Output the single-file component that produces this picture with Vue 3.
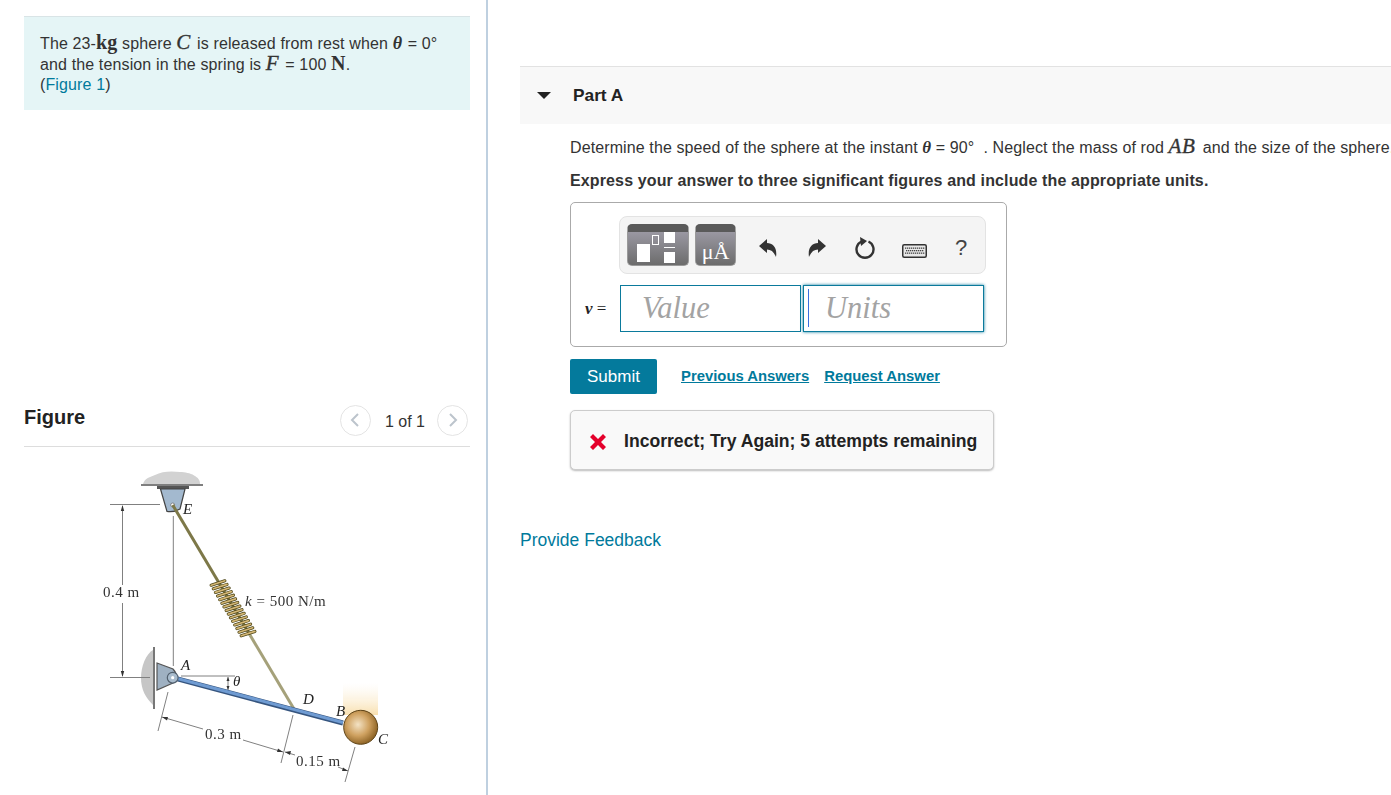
<script setup>
const ux = 121 / 237
const uy = 204 / 237
const coils = Array.from({ length: 15 }, (_, i) => {
  const cx = 218 + ux * 4.2 * i
  const cy = 583 + uy * 4.2 * i
  return {
    x1: cx - uy * 7 - ux * 1.6,
    y1: cy + ux * 7 - uy * 1.6,
    x2: cx + uy * 7 + ux * 1.6,
    y2: cy - ux * 7 + uy * 1.6
  }
})
const keyRows = [
  { y: 3.5, xs: [3, 5, 7, 9, 11, 13, 15, 17, 19, 21] },
  { y: 6, xs: [4, 6, 8, 10, 12, 14, 16, 18, 20] },
  { y: 8.5, xs: [3, 5, 7, 9, 11, 13, 15, 17, 19, 21] }
]
</script>

<template>
  <div class="page">
    <aside class="left">
      <div class="problem">
        The 23-<span class="unit">kg</span> sphere <i class="math big">C</i> is released from rest when <i class="math bold">θ</i> = 0°<br />
        and the tension in the spring is <i class="math big">F</i> = 100 <span class="unit">N</span>.<br />
        (<a class="figlink">Figure 1</a>)
      </div>
      <div class="fighead">
        <h2>Figure</h2>
        <div class="pager">
          <span class="circle">
            <svg width="10" height="16" viewBox="0 0 10 16"><path d="M8 2 L2 8 L8 14" /></svg>
          </span>
          <span class="count">1 of 1</span>
          <span class="circle">
            <svg width="10" height="16" viewBox="0 0 10 16"><path d="M2 2 L8 8 L2 14" /></svg>
          </span>
        </div>
      </div>
      <svg class="figure" width="446" height="348" viewBox="24 447 446 348">
        <defs>
          <radialGradient id="ball" cx="0.42" cy="0.42" r="0.6">
            <stop offset="0" stop-color="#f3e2c4" />
            <stop offset="0.55" stop-color="#cfa160" />
            <stop offset="1" stop-color="#8c6224" />
          </radialGradient>
          <linearGradient id="glow" x1="0" y1="0" x2="0" y2="1">
            <stop offset="0" stop-color="#fdf3df" stop-opacity="0" />
            <stop offset="1" stop-color="#f8dfae" />
          </linearGradient>
        </defs>

        <path d="M143 484 C145 478 150 477 155 475 C162 471 172 471 180 472 C190 472 201 477 200 484 Z" fill="#d2d2d2" />
        <path d="M153 705 C146 698 141 690 141 678 C141 666 146 654 153 650 Z" fill="#c6c6c6" />

        <line x1="141" y1="485" x2="203" y2="485" stroke="#555" stroke-width="1.6" />
        <rect x="157" y="486" width="32" height="3" fill="#555" />
        <path d="M160.5 489 L185 489 L180 509 Q174 512.5 167 511.5 Z" fill="#a3b9cf" stroke="#444" stroke-width="1.2" />
        <circle cx="172.7" cy="505" r="2" fill="#fff" stroke="#666" stroke-width="0.7" />

        <g stroke="#808080" stroke-width="1" fill="none">
          <line x1="110" y1="504.5" x2="160" y2="504.5" />
          <line x1="122.5" y1="506" x2="122.5" y2="585" />
          <line x1="122.5" y1="603" x2="122.5" y2="676" />
          <line x1="110" y1="677.5" x2="150" y2="677.5" />
          <line x1="173.3" y1="516" x2="173.3" y2="666" />
          <line x1="181" y1="676" x2="235" y2="676" />
          <line x1="168" y1="692" x2="158" y2="731" />
          <line x1="293" y1="715" x2="281" y2="763" />
          <line x1="355" y1="747" x2="345" y2="782" />
          <line x1="162" y1="717" x2="203" y2="729" />
          <line x1="243" y1="740" x2="283" y2="752" />
          <line x1="285" y1="752" x2="295" y2="755" />
          <line x1="338" y1="767" x2="348" y2="771" />
          <line x1="228" y1="677" x2="228" y2="693" />
        </g>
        <g fill="#333">
          <path d="M122.5 505 L120.8 511 L124.2 511 Z" />
          <path d="M122.5 677 L120.8 671 L124.2 671 Z" />
          <path d="M162 717 L168 717 L167 720.5 Z" />
          <path d="M283 752 L277 752 L278 748.5 Z" />
          <path d="M285 752 L291 751 L290 755 Z" />
          <path d="M348 771 L342 771 L343 767.5 Z" />
          <path d="M228 677 L226.5 681 L229.5 681 Z" />
          <path d="M228 690 L226.5 686 L229.5 686 Z" />
        </g>

        <rect x="343" y="683" width="35" height="32" fill="url(#glow)" />

        <line x1="172.7" y1="505" x2="250" y2="635" stroke="#7d7848" stroke-width="3" />
        <line x1="250" y1="635" x2="294" y2="709" stroke="#a5a17a" stroke-width="3" />
        <g stroke="#4f4719" stroke-width="3.2" stroke-linecap="round">
          <line v-for="(c, i) in coils" :key="'d' + i" :x1="c.x1" :y1="c.y1" :x2="c.x2" :y2="c.y2" />
        </g>
        <g stroke="#d4b775" stroke-width="1.7" stroke-linecap="round">
          <line v-for="(c, i) in coils" :key="'l' + i" :x1="c.x1" :y1="c.y1" :x2="c.x2" :y2="c.y2" />
        </g>

        <line x1="154" y1="647" x2="154" y2="709" stroke="#555" stroke-width="1.6" />
        <path d="M157 663 L173 669 Q180 677 173 683 L157 690 Z" fill="#9fb1c2" stroke="#555" stroke-width="1.2" />
        <line x1="172.7" y1="677.7" x2="343" y2="723" stroke="#36557f" stroke-width="5" />
        <line x1="172.7" y1="677.2" x2="343" y2="722.5" stroke="#6f9bd2" stroke-width="3" />
        <circle cx="172.7" cy="677.7" r="5.4" fill="#a9bccd" stroke="#52606e" stroke-width="1.2" />
        <circle cx="172.7" cy="677.7" r="1.6" fill="#fff" />
        <circle cx="360.7" cy="727.3" r="17" fill="url(#ball)" stroke="#5f4418" stroke-width="1" />

        <g class="dim">
          <text x="103" y="597">0.4 m</text>
          <text x="245" y="606"><tspan class="ital">k</tspan> = 500 N/m</text>
          <text x="205" y="739">0.3 m</text>
          <text x="296" y="766">0.15 m</text>
        </g>
        <g class="lab">
          <text x="183" y="514">E</text>
          <text x="181" y="670">A</text>
          <text x="233" y="686">θ</text>
          <text x="303" y="704">D</text>
          <text x="336" y="716">B</text>
          <text x="378" y="744">C</text>
        </g>
      </svg>
    </aside>

    <main class="right">
      <header class="parthead">
        <span class="tri"></span>
        <h3>Part A</h3>
      </header>
      <section class="partbody">
        <p class="q">
          Determine the speed of the sphere at the instant <i class="math bold">θ</i> = 90° &nbsp;. Neglect the mass of rod <i class="math big">AB</i> and the size of the sphere.
        </p>
        <p class="ins">Express your answer to three significant figures and include the appropriate units.</p>

        <div class="answer">
          <div class="toolbar">
            <div class="tbtn wide">
              <span class="sq-big"></span>
              <span class="sq-small"></span>
              <span class="frac"><b></b><em></em><b></b></span>
            </div>
            <div class="tbtn narrow"><span class="mu">μÅ</span></div>
            <div class="icons">
              <svg class="ic" width="20" height="20" viewBox="0 0 20 20"><path d="M1 8 L9 1 L9 5 C15 5 19.5 10 18 19 C16 14 13 11.5 9 11.5 L9 15 Z" /></svg>
              <svg class="ic redo" width="20" height="20" viewBox="0 0 20 20"><path d="M19 8 L11 1 L11 5 C5 5 .5 10 2 19 C4 14 7 11.5 11 11.5 L11 15 Z" /></svg>
              <svg class="ic reset" width="22" height="24" viewBox="0 0 22 24"><path class="arc" d="M7.5 5.5 A8.5 8.5 0 1 0 14.5 5.5" /><path d="M6 1 L13 5 L7 10 Z" /></svg>
              <svg class="kb" width="25" height="16" viewBox="0 0 25 14">
                <rect x=".75" y=".75" width="23.5" height="12.5" rx="1.5" />
                <g v-for="r in keyRows" :key="r.y">
                  <rect v-for="x in r.xs" :key="x" :x="x" :y="r.y" width="1.3" height="1.3" />
                </g>
              </svg>
              <span class="help">?</span>
            </div>
          </div>
          <div class="inputs">
            <span class="var"><i>v</i> =</span>
            <div class="field">Value</div>
            <div class="field focus"><span class="caret"></span>Units</div>
          </div>
        </div>

        <div class="actions">
          <button class="submit">Submit</button>
          <a class="act">Previous Answers</a>
          <a class="act">Request Answer</a>
        </div>

        <div class="result">
          <svg width="18" height="18" viewBox="0 0 18 18"><path d="M1 4 L4 1 L9 6 L14 1 L17 4 L12 9 L17 14 L14 17 L9 12 L4 17 L1 14 L6 9 Z" /></svg>
          <span>Incorrect; Try Again; 5 attempts remaining</span>
        </div>
      </section>
      <a class="feedback">Provide Feedback</a>
    </main>
  </div>
</template>

<style>
html, body { margin: 0; background: #fff; }
</style>

<style scoped>
.page {
  display: flex;
  width: 1391px;
  height: 795px;
  overflow: hidden;
  font-family: "Liberation Sans", Arial, sans-serif;
  font-size: 16px;
  color: #333;
  background: #fff;
}
.left {
  flex: none;
  box-sizing: border-box;
  width: 488px;
  padding: 16px 16px 0 24px;
  border-right: 2px solid #bfd0e0;
}
.problem {
  box-sizing: border-box;
  height: 94px;
  padding: 17px 16px 0;
  line-height: 20.5px;
  letter-spacing: 0.13px;
  background: #e5f5f6;
  border-top: 1px solid #d9e4e6;
  white-space: nowrap;
}
.math { font-family: "Liberation Serif", "Times New Roman", serif; line-height: 0; }
.big { font-size: 21px; font-weight: 400; padding-right: 2px; -webkit-text-stroke: 0.35px #333; }
.bold { font-weight: 700; font-size: 18px; padding-right: 1px; }
.unit { font-family: "Liberation Serif", serif; font-weight: 700; font-size: 20px; line-height: 0; }
.figlink { color: #007a9c; }
.fighead {
  display: flex;
  align-items: center;
  justify-content: space-between;
  box-sizing: border-box;
  height: 50px;
  margin-top: 287px;
  padding-bottom: 3px;
  border-bottom: 1px solid #ddd;
}
.fighead h2 {
  margin: 0;
  font-size: 20px;
  font-weight: 700;
  color: #222;
  position: relative;
  top: -3px;
}
.pager { display: flex; align-items: center; margin-right: 2px; }
.count { margin: 3px 12px 0 14px; color: #333; }
.circle {
  display: flex;
  align-items: center;
  justify-content: center;
  width: 31px;
  height: 31px;
  box-sizing: border-box;
  border: 1px solid #e4e4e4;
  border-radius: 50%;
}
.circle path { fill: none; stroke: #bcc4cc; stroke-width: 2; }
.figure { display: block; filter: blur(0.45px); }
.dim text { font: 15px "Liberation Serif", serif; letter-spacing: 0.5px; fill: #333; }
.ital { font-style: italic; }
.lab text { font: italic 15px "Liberation Serif", serif; fill: #222; }

.right { flex: 1; min-width: 0; padding: 66px 0 0 32px; }
.parthead {
  display: flex;
  align-items: center;
  height: 57px;
  border-top: 1px solid #e2e2e2;
  background: #f8f8f8;
}
.tri {
  width: 0;
  height: 0;
  margin-left: 17px;
  border-left: 7px solid transparent;
  border-right: 7px solid transparent;
  border-top: 7px solid #222;
}
.parthead h3 { margin: 0 0 0 22px; font-size: 17.3px; font-weight: 700; color: #222; }
.partbody { padding-left: 50px; letter-spacing: 0.13px; }
.q { margin: 14px 0 0; line-height: 20px; white-space: nowrap; letter-spacing: 0.11px; }
.q .bold { padding-right: 0; font-size: 17px; }
.q .big { padding-right: 3px; letter-spacing: 0.5px; }
.ins { margin: 13px 0 0; line-height: 20px; font-weight: 700; white-space: nowrap; }
.answer {
  box-sizing: border-box;
  width: 437px;
  height: 145px;
  margin-top: 11px;
  padding: 13px 20px 0 13px;
  border: 1px solid #aaa;
  border-radius: 5px;
  letter-spacing: 0;
}
.toolbar {
  display: flex;
  align-items: center;
  box-sizing: border-box;
  width: 367px;
  height: 58px;
  margin-left: 35px;
  padding-left: 7px;
  background: #f4f4f4;
  border: 1px solid #e3e3e3;
  border-radius: 8px;
}
.tbtn {
  position: relative;
  box-sizing: border-box;
  height: 42px;
  border: 1px solid #9a9a9a;
  border-top: 8px solid #5a5a5a;
  border-radius: 5px;
  background: linear-gradient(#9a98a2, #6c6c6c);
}
.wide { width: 62px; margin-right: 6px; }
.narrow { width: 41px; text-align: center; }
.sq-big { position: absolute; left: 9px; top: 12px; width: 13px; height: 18px; background: #fff; }
.sq-small { position: absolute; left: 24px; top: 3px; box-sizing: border-box; width: 7px; height: 10px; border: 1px solid #fff; }
.frac { position: absolute; left: 36px; top: 0; display: flex; flex-direction: column; width: 11px; }
.frac b { display: block; height: 11px; background: #fff; }
.frac em { display: block; height: 1px; margin: 4px 0; background: #fff; }
.mu { display: block; margin-top: 6px; font: 22px/28px "Liberation Serif", serif; color: #fff; }
.icons { display: flex; align-items: center; margin: 6px 0 0 22px; }
.ic path { fill: #333; }
.ic { margin-right: 29px; flex: none; }
.ic.redo { margin-right: 27px; }
.ic.reset { margin-right: 26px; }
.reset .arc { fill: none; stroke: #333; stroke-width: 2.4; }
.kb { flex: none; margin-top: 6px; }
.kb > rect { fill: #e8e8e8; stroke: #333; stroke-width: 1.5; }
.kb g rect { fill: #444; }
.help { margin-left: 28px; font-size: 22px; color: #444; }
.inputs { display: flex; align-items: center; margin-top: 11px; }
.var { flex: none; width: 36px; padding-left: 1px; box-sizing: border-box; font: 17px "Liberation Serif", serif; color: #222; }
.var i { font-weight: 700; }
.field {
  position: relative;
  box-sizing: border-box;
  width: 181px;
  height: 47px;
  padding-left: 21px;
  border: 1px solid #0b7a9c;
  font: italic 30.5px/45px "Liberation Serif", serif;
  color: #a3a3a3;
}
.focus { margin-left: 2px; box-shadow: 0 0 3px #0b7a9c; }
.caret { position: absolute; left: 4px; top: 3px; width: 1px; height: 38px; background: #3a6fe0; }
.actions { display: flex; align-items: center; margin-top: 12px; letter-spacing: 0; }
.submit {
  box-sizing: border-box;
  width: 87px;
  height: 35px;
  padding: 0;
  border: 0;
  border-radius: 2px;
  background: #047a9c;
  color: #fff;
  font: 17px "Liberation Sans", Arial, sans-serif;
}
.act {
  color: #007a9c;
  font-weight: 700;
  font-size: 14.85px;
  text-decoration: underline;
  margin-left: 15px;
  margin-bottom: 2px;
}
.submit + .act { margin-left: 24px; }
.result {
  display: flex;
  align-items: center;
  box-sizing: border-box;
  width: 424px;
  height: 60px;
  margin-top: 16px;
  padding: 3px 0 0 18px;
  background: #f9f9f9;
  border: 1px solid #ccc;
  border-radius: 5px;
  box-shadow: 0 1px 2px #bbb;
  font-weight: 700;
  font-size: 17.6px;
  letter-spacing: 0;
  color: #222;
  white-space: nowrap;
}
.result svg { flex: none; margin-right: 17px; }
.result path { fill: #e4002b; }
.feedback { display: block; margin-top: 59px; font-size: 17.5px; line-height: 22px; color: #007a9c; }
</style>
